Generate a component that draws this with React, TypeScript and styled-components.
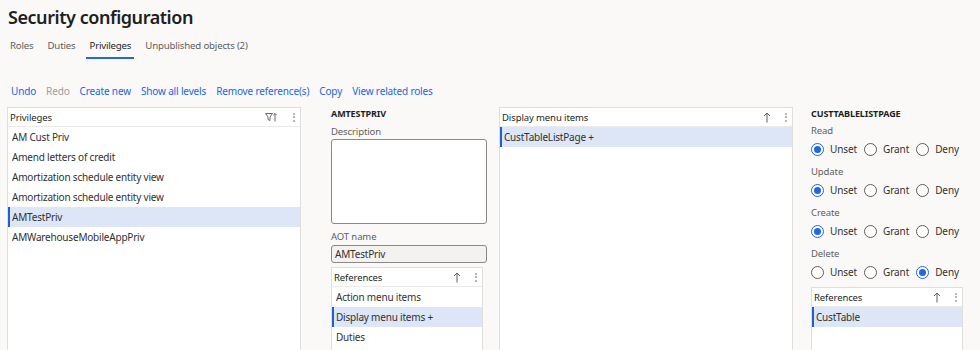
import React, { FC } from "react";
import styled, { createGlobalStyle, css } from "styled-components";

const GlobalStyle = createGlobalStyle`
  html, body {
    margin: 0;
    padding: 0;
    background: #faf9f8;
    font-family: "Noto Sans", "Open Sans", Arial, sans-serif;
    color: #323130;
  }
`;

const BLUE = "#2266e3";

const Page = styled.div`
  width: 980px;
  height: 350px;
  overflow: hidden;
`;

const Title = styled.h1`
  margin: 0;
  padding: 4px 0 0 8px;
  font-size: 18px;
  font-weight: 600;
  line-height: 26px;
  letter-spacing: -0.45px;
  color: #201f1e;
`;

const Tabs = styled.div`
  display: flex;
  gap: 8px;
  margin-top: 5px;
  padding-left: 7px;
  height: 24px;
`;

const Tab = styled.div<{ $active?: boolean }>`
  padding: 0 3px;
  font-size: 9.7px;
  letter-spacing: -0.2px;
  line-height: 22px;
  color: ${(p) => (p.$active ? "#201f1e" : "#605e5c")};
  border-bottom: 2px solid ${(p) => (p.$active ? BLUE : "transparent")};
`;

const Toolbar = styled.div`
  display: flex;
  gap: 10px;
  margin-top: 21px;
  padding-left: 11px;
  height: 22px;
  align-items: center;
`;

const Action = styled.span<{ $disabled?: boolean }>`
  font-size: 10px;
  letter-spacing: -0.15px;
  color: ${(p) => (p.$disabled ? "#a19f9d" : BLUE)};
`;

const Content = styled.div`
  display: flex;
  align-items: flex-start;
  margin-top: 5px;
  padding-left: 7px;
`;

const Grid = styled.div<{ $width: number; $height: number }>`
  box-sizing: border-box;
  width: ${(p) => p.$width}px;
  height: ${(p) => p.$height}px;
  background: #fff;
  border: 1px solid #e1dfdd;
  flex-shrink: 0;
`;

const GridHeader = styled.div`
  display: flex;
  align-items: center;
  height: 18px;
  padding: 0 5px 0 2px;
  border-bottom: 1px solid #edebe9;
  font-size: 9.5px;
  letter-spacing: -0.1px;
  color: #201f1e;
`;

const HeaderLabel = styled.span`
  flex: 1;
`;

const HeaderIcons = styled.div<{ $gap: number }>`
  display: flex;
  align-items: center;
  gap: ${(p) => p.$gap}px;
`;

const Row = styled.div<{ $selected?: boolean }>`
  box-sizing: border-box;
  height: 20px;
  line-height: 20px;
  padding-left: 2px;
  font-size: 10px;
  letter-spacing: -0.2px;
  color: #323130;
  white-space: nowrap;
  border-left: 2px solid transparent;
  ${(p) =>
    p.$selected &&
    css`
      background: #dce6f7;
      border-left-color: #1f5fd6;
    `}
`;

const Dots = styled.span`
  display: flex;
  flex-direction: column;
  gap: 1.5px;
  & > i {
    display: block;
    width: 2px;
    height: 2px;
    border-radius: 50%;
    background: #a19f9d;
  }
`;

const MoreDots: FC = () => (
  <Dots>
    <i />
    <i />
    <i />
  </Dots>
);

const UpArrow: FC = () => (
  <svg width="8" height="11" viewBox="0 0 8 11" fill="none">
    <path d="M4 10.5V1M1 4l3-3 3 3" stroke="#605e5c" strokeWidth="1" />
  </svg>
);

const FilterSort: FC = () => (
  <svg width="12" height="10" viewBox="0 0 12 10" fill="none">
    <path d="M0.5 1.5h7L5 5v3.5L3 7.5V5z" stroke="#605e5c" strokeWidth="0.9" strokeLinejoin="round" />
    <path d="M10 9.5V1.5M8.3 3.2 10 1.5l1.7 1.7" stroke="#605e5c" strokeWidth="0.9" />
  </svg>
);

const MiddleCol = styled.div`
  display: flex;
  flex-direction: column;
  width: 156px;
  margin-left: 30px;
  flex-shrink: 0;
`;

const SectionTitle = styled.div`
  font-size: 9px;
  font-weight: 700;
  line-height: 14px;
  color: #201f1e;
  letter-spacing: -0.1px;
`;

const FieldLabel = styled.div<{ $top: number }>`
  margin-top: ${(p) => p.$top}px;
  font-size: 9.5px;
  line-height: 14px;
  letter-spacing: -0.1px;
  color: #605e5c;
`;

const TextArea = styled.div`
  box-sizing: border-box;
  height: 85px;
  background: #fff;
  border: 1px solid #8a8886;
  border-radius: 3px;
`;

const ReadOnlyInput = styled.div`
  box-sizing: border-box;
  height: 18px;
  margin-top: 1px;
  padding-left: 3px;
  background: #f3f2f1;
  border: 1px solid #8a8886;
  border-radius: 3px;
  font-size: 10px;
  line-height: 16px;
  letter-spacing: -0.2px;
  color: #323130;
`;

const Spaced = styled.div<{ $top: number; $left?: number }>`
  margin-top: ${(p) => p.$top}px;
  margin-left: ${(p) => p.$left ?? 0}px;
  flex-shrink: 0;
`;

const RadioCol = styled.div`
  display: flex;
  flex-direction: column;
  width: 152px;
  margin-left: 18px;
  flex-shrink: 0;
`;

const PermGroup = styled.div<{ $top: number }>`
  margin-top: ${(p) => p.$top}px;
`;

const RadioRow = styled.div`
  display: flex;
  align-items: center;
  height: 20px;
  margin-top: 1px;
`;

const RadioItem = styled.label`
  display: flex;
  align-items: center;
  gap: 6px;
  margin-right: 7px;
  font-size: 10px;
  letter-spacing: -0.1px;
  color: #323130;
`;

const Circle = styled.span<{ $checked?: boolean }>`
  box-sizing: border-box;
  width: 13px;
  height: 13px;
  border-radius: 50%;
  border: 1px solid ${(p) => (p.$checked ? BLUE : "#605e5c")};
  display: flex;
  align-items: center;
  justify-content: center;
  background: #fff;
  &::after {
    content: "";
    width: 7px;
    height: 7px;
    border-radius: 50%;
    background: ${(p) => (p.$checked ? BLUE : "transparent")};
  }
`;

const options = ["Unset", "Grant", "Deny"];

const Permission: FC<{ label: string; value: string; top: number }> = ({ label, value, top }) => (
  <PermGroup $top={top}>
    <FieldLabel $top={0}>{label}</FieldLabel>
    <RadioRow>
      {options.map((o) => (
        <RadioItem key={o}>
          <Circle $checked={o === value} />
          {o}
        </RadioItem>
      ))}
    </RadioRow>
  </PermGroup>
);

const privileges = [
  "AM Cust Priv",
  "Amend letters of credit",
  "Amortization schedule entity view",
  "Amortization schedule entity view",
  "AMTestPriv",
  "AMWarehouseMobileAppPriv",
];

const App: FC = () => {
  return (
    <Page>
      <GlobalStyle />
      <Title>Security configuration</Title>
      <Tabs>
        <Tab>Roles</Tab>
        <Tab>Duties</Tab>
        <Tab $active>Privileges</Tab>
        <Tab>Unpublished objects (2)</Tab>
      </Tabs>
      <Toolbar>
        <Action>Undo</Action>
        <Action $disabled>Redo</Action>
        <Action>Create new</Action>
        <Action>Show all levels</Action>
        <Action>Remove reference(s)</Action>
        <Action>Copy</Action>
        <Action>View related roles</Action>
      </Toolbar>
      <Content>
        <Grid $width={294} $height={260}>
          <GridHeader>
            <HeaderLabel>Privileges</HeaderLabel>
            <HeaderIcons $gap={16}>
              <FilterSort />
              <MoreDots />
            </HeaderIcons>
          </GridHeader>
          {privileges.map((p, i) => (
            <Row key={i} $selected={p === "AMTestPriv"}>
              {p}
            </Row>
          ))}
        </Grid>

        <MiddleCol>
          <SectionTitle>AMTESTPRIV</SectionTitle>
          <FieldLabel $top={4}>Description</FieldLabel>
          <TextArea />
          <FieldLabel $top={6}>AOT name</FieldLabel>
          <ReadOnlyInput>AMTestPriv</ReadOnlyInput>
          <Spaced $top={4}>
            <Grid $width={152} $height={120}>
              <GridHeader>
                <HeaderLabel>References</HeaderLabel>
                <HeaderIcons $gap={14}>
                  <UpArrow />
                  <MoreDots />
                </HeaderIcons>
              </GridHeader>
              <Row>Action menu items</Row>
              <Row $selected>Display menu items +</Row>
              <Row>Duties</Row>
            </Grid>
          </Spaced>
        </MiddleCol>

        <Spaced $top={0} $left={12}>
          <Grid $width={294} $height={260}>
            <GridHeader>
              <HeaderLabel>Display menu items</HeaderLabel>
              <HeaderIcons $gap={14}>
                <UpArrow />
                <MoreDots />
              </HeaderIcons>
            </GridHeader>
            <Row $selected>CustTableListPage +</Row>
          </Grid>
        </Spaced>

        <RadioCol>
          <SectionTitle>CUSTTABLELISTPAGE</SectionTitle>
          <Permission label="Read" value="Unset" top={3} />
          <Permission label="Update" value="Unset" top={6} />
          <Permission label="Create" value="Unset" top={6} />
          <Permission label="Delete" value="Deny" top={6} />
          <Spaced $top={5}>
            <Grid $width={152} $height={100}>
              <GridHeader>
                <HeaderLabel>References</HeaderLabel>
                <HeaderIcons $gap={14}>
                  <UpArrow />
                  <MoreDots />
                </HeaderIcons>
              </GridHeader>
              <Row $selected>CustTable</Row>
            </Grid>
          </Spaced>
        </RadioCol>
      </Content>
    </Page>
  );
};

export default App;
